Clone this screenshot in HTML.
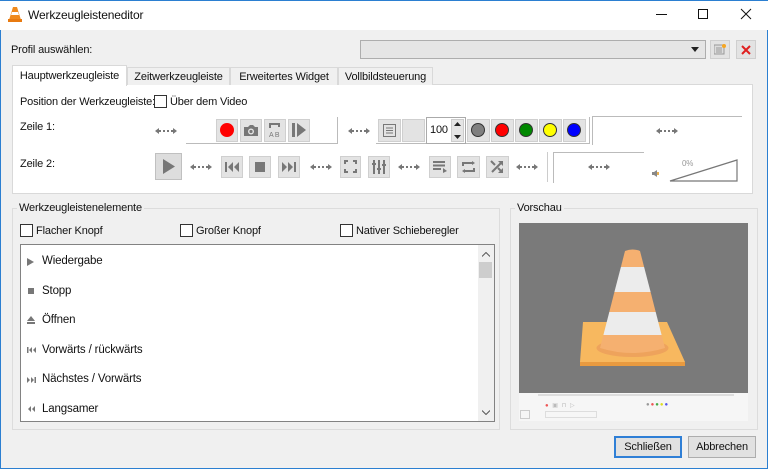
<!DOCTYPE html>
<html><head><meta charset="utf-8"><style>
*{box-sizing:border-box;margin:0;padding:0}
body{width:768px;height:469px;overflow:hidden;background:#f0f0f0;font-family:"Liberation Sans",sans-serif;font-size:11px;color:#111;position:relative;letter-spacing:-0.15px}
.a{position:absolute}
.win{position:absolute;left:0;top:0;width:768px;height:469px;border:1px solid #2b7fd1;border-top:none}
.b{position:absolute;background:#e3e3e3;border:1px solid #cfcfcf}
.cb{position:absolute;width:13px;height:13px;border:1px solid #333;background:#fff}
.arr{position:absolute;width:22px;height:6px}
.tab{position:absolute;top:67px;height:18px;border:1px solid #d9d9d9;border-bottom:none;background:#f0f0f0;padding:3px 0 0 0;text-align:center}
.li{position:absolute;left:42px;font-size:11.5px}
.dot{position:absolute;width:14px;height:14px;border-radius:50%;border:1px solid #333}
</style></head><body>
<div class="win"></div>
<div class="a" style="left:0;top:0;width:768px;height:30px;background:#fff;border-top:1px solid #2b7fd1"></div>
<svg class="a" style="left:8px;top:6px" width="14" height="16" viewBox="0 0 14 16"><path d="M5 1h4l4 13H1z" fill="#f08a1c"/><path d="M4 6h6l1 3H3z" fill="#fff"/><rect x="0" y="13" width="14" height="3" fill="#e87a10"/></svg>
<div class="a" style="left:28px;top:8px;font-size:12px">Werkzeugleisteneditor</div>
<div class="a" style="left:656px;top:14px;width:11px;height:1px;background:#111"></div>
<div class="a" style="left:698px;top:9px;width:10px;height:10px;border:1px solid #111"></div>
<svg class="a" style="left:740px;top:8px" width="12" height="12"><path d="M1 1L11 11M11 1L1 11" stroke="#111" stroke-width="1"/></svg>
<div class="a" style="left:11px;top:44px">Profil auswählen:</div>
<div class="a" style="left:360px;top:40px;width:346px;height:19px;background:#e5e5e5;border:1px solid #adadad"></div>
<svg class="a" style="left:691px;top:47px" width="8" height="5"><path d="M0 0h8L4 5z" fill="#222"/></svg>
<div class="b" style="left:710px;top:40px;width:20px;height:19px"></div>
<svg class="a" style="left:714px;top:44px" width="12" height="11"><rect x="0" y="1" width="10" height="9" fill="#ddd" stroke="#999"/><path d="M2 4h6M2 6h6M2 8h6" stroke="#999"/><circle cx="10" cy="2" r="2" fill="#f5a623"/></svg>
<div class="b" style="left:736px;top:40px;width:20px;height:19px"></div>
<svg class="a" style="left:741px;top:45px" width="10" height="10"><path d="M1 1L9 9M9 1L1 9" stroke="#e02020" stroke-width="2"/></svg>
<div class="a" style="left:12px;top:84px;width:741px;height:110px;background:#fff;border:1px solid #d9d9d9"></div>
<div class="tab" style="left:12px;top:65px;width:115px;height:21px;background:#fff;padding-top:4px">Hauptwerkzeugleiste</div>
<div class="tab" style="left:127px;width:103px">Zeitwerkzeugleiste</div>
<div class="tab" style="left:230px;width:108px">Erweitertes Widget</div>
<div class="tab" style="left:338px;width:95px">Vollbildsteuerung</div>
<div class="a" style="left:20px;top:96px">Position der Werkzeugleiste:</div>
<div class="cb" style="left:154px;top:95px"></div>
<div class="a" style="left:170px;top:96px">Über dem Video</div>
<div class="a" style="left:20px;top:121px">Zeile 1:</div>
<div class="a" style="left:20px;top:158px">Zeile 2:</div>
<svg width="0" height="0" style="position:absolute"><defs><g id="ar"><path d="M0 3L4 0V6z M22 3L18 0V6z" fill="#777"/><rect x="4" y="2" width="2" height="2" fill="#777"/><rect x="8" y="2" width="2" height="2" fill="#777"/><rect x="12" y="2" width="2" height="2" fill="#777"/><rect x="16" y="2" width="2" height="2" fill="#777"/></g></defs></svg>
<svg class="arr" style="left:155px;top:128px"><use href="#ar"/></svg>
<div class="a" style="left:186px;top:117px;width:152px;height:27px;border-right:1px solid #bbb;border-bottom:1px solid #bbb"></div>
<div class="b" style="left:216px;top:119px;width:22px;height:23px"></div><div class="dot" style="left:220px;top:123px;background:#f00;border-color:#f00"></div>
<div class="b" style="left:240px;top:119px;width:22px;height:23px"></div>
<svg class="a" style="left:243px;top:124px" width="16" height="13"><path d="M1 3h4l2-2h3l2 2h3v9H1z" fill="#777"/><circle cx="8" cy="7.5" r="3" fill="#e3e3e3"/><circle cx="8" cy="7.5" r="1.6" fill="#777"/></svg>
<div class="b" style="left:264px;top:119px;width:22px;height:23px"></div>
<svg class="a" style="left:268px;top:122px" width="14" height="16"><path d="M2 6V2h9v3" stroke="#777" stroke-width="2" fill="none"/><text x="1" y="15" font-size="7" fill="#777" font-family="Liberation Sans">A B</text></svg>
<div class="b" style="left:288px;top:119px;width:22px;height:23px"></div>
<svg class="a" style="left:292px;top:123px" width="14" height="14"><rect x="0" y="0" width="3" height="14" fill="#777"/><path d="M5 0L14 7L5 14z" fill="#777"/></svg>
<svg class="arr" style="left:348px;top:128px"><use href="#ar"/></svg>
<div class="a" style="left:376px;top:117px;width:214px;height:27px;border-bottom:1px solid #bbb;border-right:1px solid #bbb"></div>
<div class="b" style="left:378px;top:119px;width:23px;height:23px"></div>
<svg class="a" style="left:383px;top:124px" width="13" height="13"><rect x=".5" y=".5" width="12" height="12" fill="none" stroke="#777"/><path d="M3 4h7M3 6.5h7M3 9h7" stroke="#777"/></svg>
<div class="b" style="left:402px;top:119px;width:23px;height:23px"></div>
<div class="a" style="left:426px;top:117px;width:40px;height:27px;background:#fff;border:1px solid #aaa"></div>
<div class="a" style="left:430px;top:124px">100</div>
<div class="a" style="left:451px;top:119px;width:13px;height:23px;background:#e5e5e5;border:1px solid #ccc"></div>
<svg class="a" style="left:454px;top:122px" width="7" height="17"><path d="M0 4L3.5 0L7 4z M0 13L3.5 17L7 13z" fill="#222"/></svg>
<div class="b" style="left:467px;top:119px;width:23px;height:23px"></div><div class="dot" style="left:471px;top:123px;background:#808080"></div>
<div class="b" style="left:491px;top:119px;width:23px;height:23px"></div><div class="dot" style="left:495px;top:123px;background:#f00"></div>
<div class="b" style="left:515px;top:119px;width:23px;height:23px"></div><div class="dot" style="left:519px;top:123px;background:#080"></div>
<div class="b" style="left:539px;top:119px;width:23px;height:23px"></div><div class="dot" style="left:543px;top:123px;background:#ff0"></div>
<div class="b" style="left:563px;top:119px;width:23px;height:23px"></div><div class="dot" style="left:567px;top:123px;background:#00f"></div>
<div class="a" style="left:592px;top:116px;width:150px;height:29px;border-top:1px solid #bbb;border-left:1px solid #bbb"></div>
<svg class="arr" style="left:656px;top:128px"><use href="#ar"/></svg>
<div class="b" style="left:155px;top:153px;width:27px;height:27px;background:#ddd;border-color:#c0c0c0"></div>
<svg class="a" style="left:163px;top:159px" width="12" height="15"><path d="M0 0L12 7.5L0 15z" fill="#777"/></svg>
<svg class="arr" style="left:190px;top:164px"><use href="#ar"/></svg>
<div class="b" style="left:221px;top:156px;width:22px;height:22px"></div>
<svg class="a" style="left:225px;top:162px" width="14" height="10"><rect width="2" height="10" fill="#777"/><path d="M8 0L3 5L8 10zM14 0L9 5L14 10z" fill="#777"/></svg>
<div class="b" style="left:249px;top:156px;width:22px;height:22px"></div>
<div class="a" style="left:255px;top:162px;width:10px;height:10px;background:#777"></div>
<div class="b" style="left:278px;top:156px;width:22px;height:22px"></div>
<svg class="a" style="left:282px;top:162px" width="14" height="10"><path d="M0 0L5 5L0 10zM6 0L11 5L6 10z" fill="#777"/><rect x="12" width="2" height="10" fill="#777"/></svg>
<svg class="arr" style="left:310px;top:164px"><use href="#ar"/></svg>
<div class="b" style="left:340px;top:156px;width:21px;height:22px"></div>
<svg class="a" style="left:344px;top:160px" width="13" height="13"><path d="M1 4V1h3M9 1h3v3M12 9v3H9M4 12H1V9" stroke="#777" stroke-width="2" fill="none"/></svg>
<div class="b" style="left:368px;top:156px;width:22px;height:22px"></div>
<svg class="a" style="left:371px;top:160px" width="16" height="14"><path d="M3 0v14M8 0v14M13 0v14" stroke="#777" stroke-width="2"/><path d="M1 4h4M6 9h4M11 5h4" stroke="#777" stroke-width="2"/></svg>
<svg class="arr" style="left:398px;top:164px"><use href="#ar"/></svg>
<div class="b" style="left:429px;top:156px;width:22px;height:22px"></div>
<svg class="a" style="left:433px;top:161px" width="14" height="12"><path d="M0 1h12M0 4.5h12M0 8h8" stroke="#777" stroke-width="2"/><path d="M10 7l4 3l-4 2z" fill="#777"/></svg>
<div class="b" style="left:457px;top:156px;width:23px;height:22px"></div>
<svg class="a" style="left:461px;top:161px" width="15" height="12"><path d="M2 5V2h10M13 7v3H3" stroke="#777" stroke-width="2" fill="none"/><path d="M11 0l3 2l-3 2zM4 8l-3 2l3 2z" fill="#777"/></svg>
<div class="b" style="left:486px;top:156px;width:23px;height:22px"></div>
<svg class="a" style="left:490px;top:160px" width="14" height="14"><path d="M1 1l4 4" stroke="#777" stroke-width="2"/><path d="M2 12L11 3" stroke="#777" stroke-width="2"/><path d="M8 1h5v5z" fill="#777"/><path d="M8 8l4 4" stroke="#777" stroke-width="2"/><path d="M13 8v5H8z" fill="#777"/></svg>
<svg class="arr" style="left:516px;top:164px"><use href="#ar"/></svg>
<div class="a" style="left:547px;top:152px;width:1px;height:30px;background:#ccc"></div>
<div class="a" style="left:553px;top:152px;width:91px;height:31px;border-top:1px solid #bbb;border-left:1px solid #bbb"></div>
<svg class="arr" style="left:588px;top:164px"><use href="#ar"/></svg>
<svg class="a" style="left:652px;top:170px" width="7" height="7"><path d="M0 2h2l3-2v7L2 5H0z" fill="#888"/><rect x="5" y="2" width="2" height="3" fill="#e8b050"/></svg>
<svg class="a" style="left:669px;top:159px" width="70" height="24"><path d="M1 22L68 1V22z" fill="none" stroke="#777" stroke-width="1.2"/></svg>
<div class="a" style="left:682px;top:159px;font-size:8px;color:#999">0%</div>
<div class="a" style="left:12px;top:208px;width:488px;height:222px;border:1px solid #dcdcdc"></div>
<div class="a" style="left:17px;top:202px;background:#f0f0f0;padding:0 2px">Werkzeugleistenelemente</div>
<div class="cb" style="left:20px;top:224px"></div><div class="a" style="left:36px;top:225px">Flacher Knopf</div>
<div class="cb" style="left:180px;top:224px"></div><div class="a" style="left:196px;top:225px">Großer Knopf</div>
<div class="cb" style="left:340px;top:224px"></div><div class="a" style="left:356px;top:225px">Nativer Schieberegler</div>
<div class="a" style="left:20px;top:244px;width:475px;height:178px;background:#fff;border:1px solid #828282"></div>
<div class="a" style="left:478px;top:245px;width:16px;height:176px;background:#f0f0f0"></div>
<div class="a" style="left:479px;top:262px;width:13px;height:16px;background:#cdcdcd"></div>
<svg class="a" style="left:482px;top:252px" width="8" height="5"><path d="M0 4.5L4 .5L8 4.5" stroke="#555" fill="none"/></svg>
<svg class="a" style="left:482px;top:410px" width="8" height="5"><path d="M0 .5L4 4.5L8 .5" stroke="#555" fill="none"/></svg>
<svg class="a" style="left:27px;top:258px" width="7" height="8"><path d="M0 0L7 4L0 8z" fill="#777"/></svg><div class="li" style="top:255px">Wiedergabe</div>
<div class="a" style="left:28px;top:288px;width:6px;height:6px;background:#777"></div><div class="li" style="top:285px">Stopp</div>
<svg class="a" style="left:27px;top:316px" width="8" height="8"><path d="M0 5L4 0L8 5z" fill="#777"/><rect y="6" width="8" height="2" fill="#777"/></svg><div class="li" style="top:314px">Öffnen</div>
<svg class="a" style="left:27px;top:347px" width="9" height="6"><rect width="1.5" height="6" fill="#777"/><path d="M5 0L2 3L5 6zM9 0L6 3L9 6z" fill="#777"/></svg><div class="li" style="top:344px">Vorwärts / rückwärts</div>
<svg class="a" style="left:27px;top:377px" width="9" height="6"><path d="M0 0L3 3L0 6zM4 0L7 3L4 6z" fill="#777"/><rect x="7.5" width="1.5" height="6" fill="#777"/></svg><div class="li" style="top:373px">Nächstes / Vorwärts</div>
<svg class="a" style="left:28px;top:406px" width="7" height="6"><path d="M3 0L0 3L3 6zM7 0L4 3L7 6z" fill="#777"/></svg><div class="li" style="top:403px">Langsamer</div>
<div class="a" style="left:510px;top:208px;width:248px;height:222px;border:1px solid #dcdcdc"></div>
<div class="a" style="left:515px;top:202px;background:#f0f0f0;padding:0 2px">Vorschau</div>
<div class="a" style="left:519px;top:223px;width:229px;height:170px;background:#7a7a7a"></div>
<svg class="a" style="left:575px;top:248px" width="115" height="122" viewBox="0 0 115 122">
<path d="M8 74H92L110 114H5z" fill="#f7b85f"/>
<path d="M5 114H110V118H5z" fill="#e89a40"/>
<ellipse cx="57.5" cy="100" rx="36" ry="9" fill="#eea35c"/>
<path d="M50 3Q57.5 0 65 3L69.1 19H45.9z" fill="#f5b070"/>
<path d="M45.9 19H69.1L75.6 44H39.4z" fill="#ececec"/>
<path d="M39.4 44H75.6L80.7 64H34.3z" fill="#f5b070"/>
<path d="M34.3 64H80.7L86.6 87H28.4z" fill="#ececec"/>
<path d="M28.4 87H86.6L90 100Q57.5 110 25 100z" fill="#f5b070"/>
</svg>
<div class="a" style="left:519px;top:393px;width:229px;height:28px;background:#f6f6f6"></div>
<div class="a" style="left:538px;top:394px;width:196px;height:2px;background:#ddd"></div>
<div class="a" style="left:545px;top:402px;font-size:6px;color:#e55;letter-spacing:1px">● <span style="color:#bbb">▣ ⊓ ▷</span></div>
<div class="a" style="left:646px;top:402px;font-size:6px;letter-spacing:1px"><span style="color:#999">●</span><span style="color:#e55">●</span><span style="color:#4a4">●</span><span style="color:#dd2">●</span><span style="color:#55e">●</span></div>
<div class="a" style="left:520px;top:410px;width:10px;height:9px;border:1px solid #ccc"></div>
<div class="a" style="left:545px;top:411px;width:52px;height:7px;border:1px solid #ddd"></div>
<div class="a" style="left:614px;top:436px;width:68px;height:22px;background:#e1e1e1;border:2px solid #2f7fd6;text-align:center;padding-top:3px">Schließen</div>
<div class="a" style="left:688px;top:436px;width:68px;height:22px;background:#e1e1e1;border:1px solid #adadad;text-align:center;padding-top:4px">Abbrechen</div>
</body></html>
